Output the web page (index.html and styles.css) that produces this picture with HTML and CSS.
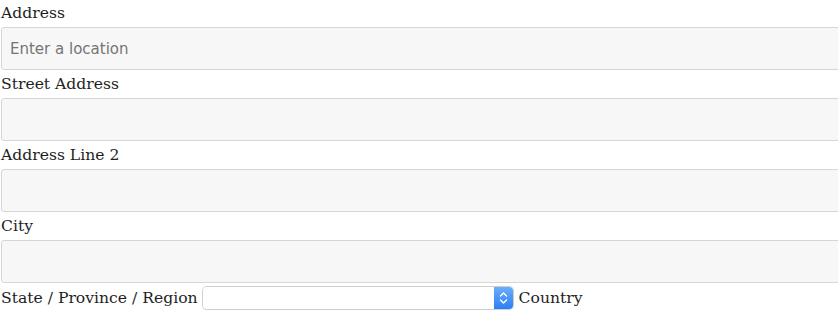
FILE: index.html
```html
<!DOCTYPE html>
<html lang="en">
<head>
    <meta charset="UTF-8">
    <title>Address</title>
    <link rel="stylesheet" href="styles.css">
</head>
<body>
    <div class="address-form">
        <label for="address">Address</label>
        <input type="text" id="address" placeholder="Enter a location">

        <label for="street">Street Address</label>
        <input type="text" id="street">

        <label for="line2">Address Line 2</label>
        <input type="text" id="line2">

        <label for="city">City</label>
        <input type="text" id="city">

        <div class="inline-row">
            <label for="state">State / Province / Region</label>
            <span class="select-box">
                <select id="state"><option></option></select>
                <span class="select-arrows">
                    <svg width="9" height="14" viewBox="0 0 9 14"><path d="M1.5 5 L4.5 2 L7.5 5 M1.5 9 L4.5 12 L7.5 9" fill="none" stroke="#fff" stroke-width="1.4" stroke-linecap="round" stroke-linejoin="round"/></svg>
                </span>
            </span>
            <label for="country">Country</label>
        </div>
    </div>
</body>
</html>
```

FILE: styles.css
```css
body {
    margin: 0;
    font-family: "DejaVu Serif", serif;
    color: #1e1e1e;
    background: #fff;
}
.address-form {
    margin: -1px 0 0 1px;
}
label {
    display: block;
    height: 28px;
    line-height: 28px;
    font-size: 15.6px;
}
input {
    display: block;
    box-sizing: border-box;
    width: calc(100% + 4px);
    height: 43px;
    margin: 0;
    padding: 0 8px;
    border: 1px solid #d6d6d6;
    border-radius: 3px;
    background: #f7f7f7;
    font-family: "DejaVu Sans", sans-serif;
    font-size: 15px;
    color: #555;
}
input::placeholder {
    color: #757575;
}
.inline-row {
    display: flex;
    align-items: center;
    height: 28px;
    margin-top: 1px;
}
.inline-row label {
    display: inline;
    height: auto;
}
.select-box {
    display: inline-flex;
    margin: 0 6px 0 5px;
    height: 22px;
    width: 310px;
    border-radius: 4px;
    overflow: hidden;
    box-shadow: 0 0 0 1px #cfcfcf, 0 1px 1px rgba(0, 0, 0, 0.1);
}
.select-box select {
    flex: 1;
    appearance: none;
    -webkit-appearance: none;
    border: none;
    background: #fff;
    margin: 0;
    padding: 0 4px;
    outline: none;
}
.select-arrows {
    width: 19px;
    display: flex;
    align-items: center;
    justify-content: center;
    background: linear-gradient(#6aaefb, #2c7ef5);
}
```
